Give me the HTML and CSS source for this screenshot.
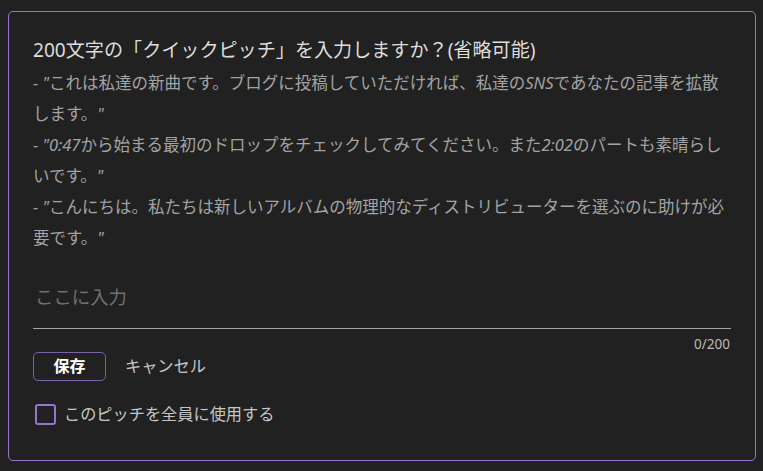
FILE: index.html
```html
<!DOCTYPE html>
<html lang="ja">
<head>
<meta charset="utf-8">
<link rel="stylesheet" href="styles.css">
</head>
<body>
<div class="card">
  <h2 class="title">200文字の「クイックピッチ」を入力しますか？(省略可能)</h2>
  <div class="examples">
    <p>- "これは私達の新曲です。ブログに投稿していただければ、私達のSNSであなたの記事を拡散します。"</p>
    <p>- "0:47から始まる最初のドロップをチェックしてみてください。また2:02のパートも素晴らしいです。"</p>
    <p>- "こんにちは。私たちは新しいアルバムの物理的なディストリビューターを選ぶのに助けが必要です。"</p>
  </div>
  <input class="field" type="text" placeholder="ここに入力">
  <div class="counter">0/200</div>
  <div class="actions">
    <button class="save" type="button">保存</button>
    <button class="cancel" type="button">キャンセル</button>
  </div>
  <label class="check">
    <span class="box"></span>
    <span class="check-label">このピッチを全員に使用する</span>
  </label>
</div>
</body>
</html>
```
FILE: styles.css
```css
html, body {
  margin: 0;
  background: #212121;
}
body {
  padding: 11px 7px 10px 8px;
  font-family: "Noto Sans", "Noto Sans CJK JP", sans-serif;
}
.card {
  border: 1px solid #9575cd;
  border-radius: 5px;
  padding: 24px 24px 35px 24px;
  box-sizing: border-box;
  height: 450px;
}
.title {
  margin: 0 0 3px 0;
  font-size: 19.1px;
  line-height: 28px;
  font-weight: 400;
  color: #dcdcdc;
}
.examples p {
  margin: 0;
  font-size: 16.5px;
  line-height: 31px;
  color: #a3a3a3;
  font-style: italic;
  font-synthesis: none;
}
.field {
  display: block;
  width: 100%;
  box-sizing: border-box;
  margin: 16px 0 0 0;
  padding: 14px 2px 18px 2px;
  border: none;
  border-bottom: 1px solid #a3a3a3;
  background: transparent;
  font-family: inherit;
  font-size: 18.4px;
  line-height: 27px;
  height: 60px;
  color: #e2e2e2;
  outline: none;
}
.field::placeholder {
  color: #707070;
}
.counter {
  margin-top: 8px;
  text-align: right;
  padding-right: 1px;
  font-size: 13.5px;
  line-height: 15px;
  color: #b9b9b9;
}
.actions {
  display: flex;
  align-items: center;
  gap: 19px;
}
.save {
  width: 73px;
  height: 29px;
  border: 1px solid #7b62a8;
  border-radius: 5px;
  background: transparent;
  color: #ffffff;
  font-family: inherit;
  font-size: 16px;
  font-weight: 700;
  padding: 0;
  line-height: 27px;
}
.cancel {
  background: transparent;
  border: none;
  padding: 0;
  color: #c6c6c6;
  font-family: inherit;
  font-size: 16.2px;
  line-height: 29px;
}
.check {
  display: flex;
  align-items: center;
  gap: 8px;
  margin-top: 22px;
  margin-left: 2px;
}
.box {
  width: 21px;
  height: 21px;
  box-sizing: border-box;
  border: 2px solid #9575cd;
  border-radius: 3px;
}
.check-label {
  font-size: 16.2px;
  line-height: 22px;
  color: #c6c6c6;
}
```
